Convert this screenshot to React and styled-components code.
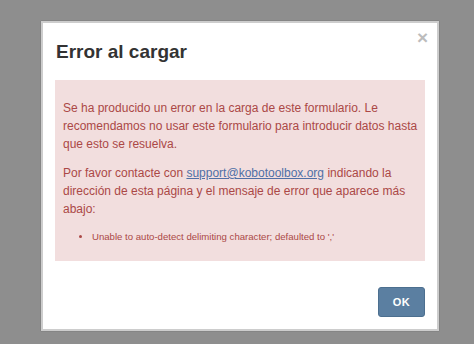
import React from 'react'
import styled, { createGlobalStyle } from 'styled-components'

const GlobalStyle = createGlobalStyle`
  html, body {
    margin: 0;
    padding: 0;
    background: #8e8e8e;
    font-family: "Liberation Sans", Arial, sans-serif;
  }
`

const Backdrop = styled.div`
  min-height: 100vh;
  box-sizing: border-box;
  padding: 21px 0 0 41px;
`

const Modal = styled.div`
  position: relative;
  box-sizing: border-box;
  width: 398px;
  background: #fff;
  border: 2px solid #cdcdcd;
  box-shadow: 0 0 1px rgba(0, 0, 0, 0.35);
  padding: 18px 12px 12px;
  display: flex;
  flex-direction: column;
`

const Close = styled.button`
  position: absolute;
  top: 5px;
  right: 9px;
  border: 0;
  background: none;
  padding: 0;
  font-family: "Liberation Sans", Arial, sans-serif;
  font-size: 19px;
  font-weight: bold;
  line-height: 1;
  color: #bcbcbc;
  cursor: pointer;
`

const Title = styled.h4`
  margin: 0 0 18px 1px;
  font-size: 19px;
  line-height: 21px;
  font-weight: bold;
  color: #333;
`

const Alert = styled.div`
  background: #f2dede;
  color: #ab4846;
  padding: 19px 4px 17px 8px;
  font-size: 12px;
  line-height: 18px;
`

const Paragraph = styled.p`
  margin: 0 0 ${p => (p.$last ? '12px' : '11px')};
`

const MailLink = styled.a`
  color: #5070a6;
  text-decoration: underline;
`

const ErrorList = styled.ul`
  margin: 0;
  padding-left: 29px;
  font-size: 9.6px;
  line-height: 14px;
`

const Footer = styled.div`
  display: flex;
  justify-content: flex-end;
  padding-top: 26px;
`

const OkButton = styled.button`
  width: 47px;
  height: 30px;
  box-sizing: border-box;
  border: 1px solid #4c6f8f;
  border-radius: 3px;
  background: #5b7fa1;
  color: #fff;
  font-family: "Liberation Sans", Arial, sans-serif;
  font-size: 11px;
  font-weight: bold;
  letter-spacing: 0.5px;
  cursor: pointer;
`

export default function App() {
  return (
    <Backdrop>
      <GlobalStyle />
      <Modal>
        <Close aria-label="Cerrar">×</Close>
        <Title>Error al cargar</Title>
        <Alert>
          <Paragraph>
            Se ha producido un error en la carga de este formulario. Le
            recomendamos no usar este formulario para introducir datos hasta
            que esto se resuelva.
          </Paragraph>
          <Paragraph $last>
            Por favor contacte con{' '}
            <MailLink href="mailto:support@kobotoolbox.org">support@kobotoolbox.org</MailLink>{' '}
            indicando la dirección de esta página y el mensaje de error que
            aparece más abajo:
          </Paragraph>
          <ErrorList>
            <li>Unable to auto-detect delimiting character; defaulted to ','</li>
          </ErrorList>
        </Alert>
        <Footer>
          <OkButton>OK</OkButton>
        </Footer>
      </Modal>
    </Backdrop>
  )
}
